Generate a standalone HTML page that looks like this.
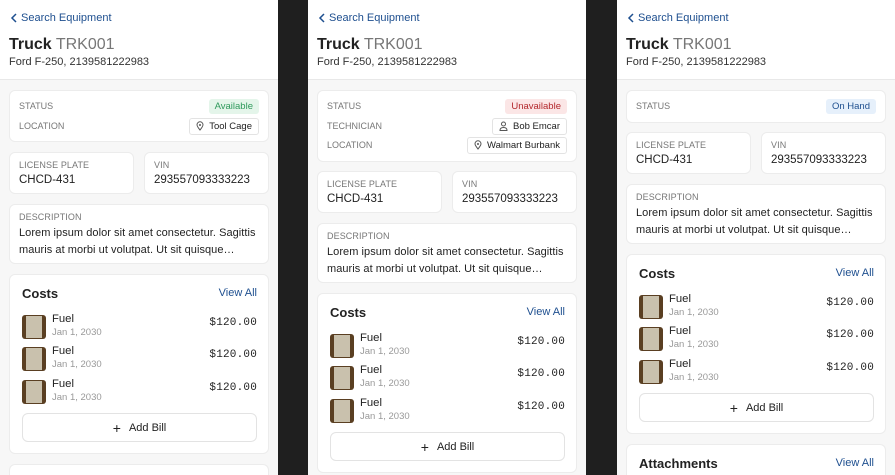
<!DOCTYPE html>
<html><head><meta charset="utf-8"><style>
*{box-sizing:border-box;margin:0;padding:0}
html,body{overflow:hidden}
body{width:895px;height:475px;background:#1f1f1f;position:relative;overflow:hidden;font-family:"Liberation Sans",sans-serif;color:#222}
.p{position:absolute;top:0;width:278px;height:475px;background:#f7f7f7;overflow:hidden}
.hd{position:absolute;left:0;top:0;width:100%;height:80px;background:#fff;border-bottom:1px solid #e8e8e8}
.back{position:absolute;left:10px;top:12px;font-size:11px;color:#1e4f8f;display:flex;align-items:center;gap:3px}
.ttl{position:absolute;left:9px;top:36px;font-size:16px;color:#222}
.ttl b{font-weight:bold}.ttl span{color:#777}
.sub{position:absolute;left:9px;top:56px;font-size:11px;color:#333}
.c{position:absolute;background:#fff;border:1px solid #ececec;border-radius:6px}
.lb{position:absolute;left:9px;font-size:9px;color:#777;letter-spacing:.1px}
.vl{position:absolute;left:9px;font-size:11.5px;color:#222}
.row{position:absolute;left:9px;right:9px;height:16px;display:flex;justify-content:space-between;align-items:center}
.row .l{font-size:9px;color:#777}
.bdg{font-size:9.5px;padding:2px 6px;border-radius:3px}
.pill{font-size:9.5px;padding:2px 6px;border:1px solid #e3e3e3;border-radius:3px;display:flex;align-items:center;gap:5px;color:#222;height:17px}
.desc{position:absolute;left:9px;right:9px;font-size:11px;line-height:17px;color:#222;display:-webkit-box;-webkit-line-clamp:2;-webkit-box-orient:vertical;overflow:hidden;letter-spacing:.05px}
.ct{position:absolute;left:12px;font-size:13px;font-weight:bold;color:#222}
.va{position:absolute;right:11px;font-size:11px;color:#1e4f8f}
.it{position:absolute;left:12px;right:11px;height:26px}
.th{position:absolute;left:0;top:0;width:24px;height:24px;border-radius:3px;background:#5a3f22}
.th:after{content:"";position:absolute;left:4px;top:1px;width:16px;height:22px;background:#c9c1ad}
.fu{position:absolute;left:30px;top:-2px;font-size:11.3px;color:#222}
.dt{position:absolute;left:30px;top:12px;font-size:9.5px;color:#999}
.pr{position:absolute;right:0;top:2px;font-family:"Liberation Mono",monospace;font-size:11px;color:#222;letter-spacing:.2px}
.btn{position:absolute;left:12px;right:11px;height:29px;border:1px solid #e3e3e3;border-radius:6px;font-size:11px;display:flex;align-items:center;justify-content:center;gap:8px;color:#222}
</style></head><body>

<!-- Panel 1 -->
<div class="p" style="left:0">
 <div class="hd"><div class="back"><svg width="8" height="10"><path d="M6 1L2 5l4 4" stroke="#1e4f8f" stroke-width="1.5" fill="none"/></svg>Search Equipment</div>
 <div class="ttl"><b>Truck</b> <span>TRK001</span></div><div class="sub">Ford F-250, 2139581222983</div></div>
 <div class="c" style="left:9px;top:90px;width:260px;height:52px">
  <div class="row" style="top:7px"><span class="l">STATUS</span><span class="bdg" style="background:#e4f5ea;color:#2f9a5c">Available</span></div>
  <div class="row" style="top:27px"><span class="l">LOCATION</span><span class="pill"><svg width="8" height="10"><path d="M4 9C1.5 6 1 5 1 3.8a3 3 0 0 1 6 0C7 5 6.5 6 4 9z" stroke="#555" fill="none"/><circle cx="4" cy="4" r="1" fill="#555"/></svg>Tool Cage</span></div>
 </div>
 <div class="c" style="left:9px;top:152px;width:125px;height:42px"><div class="lb" style="top:7px">LICENSE PLATE</div><div class="vl" style="top:21px">CHCD-431</div></div>
 <div class="c" style="left:144px;top:152px;width:125px;height:42px"><div class="lb" style="top:7px">VIN</div><div class="vl" style="top:21px">293557093333223</div></div>
 <div class="c" style="left:9px;top:204px;width:260px;height:60px"><div class="lb" style="top:7px">DESCRIPTION</div><div class="desc" style="top:20px">Lorem ipsum dolor sit amet consectetur. Sagittis mauris at morbi ut volutpat. Ut sit quisque consequat ipsum dolor sit amet</div></div>
 <div class="c" style="left:9px;top:274px;width:260px;height:180px">
  <div class="ct" style="top:11px">Costs</div><div class="va" style="top:12px">View All</div>
  <div class="it" style="top:40px"><div class="th"></div><div class="fu">Fuel</div><div class="dt">Jan 1, 2030</div><div class="pr">$120.00</div></div>
  <div class="it" style="top:72px"><div class="th"></div><div class="fu">Fuel</div><div class="dt">Jan 1, 2030</div><div class="pr">$120.00</div></div>
  <div class="it" style="top:105px"><div class="th"></div><div class="fu">Fuel</div><div class="dt">Jan 1, 2030</div><div class="pr">$120.00</div></div>
  <div class="btn" style="top:138px"><span style="font-size:14px">+</span>Add Bill</div>
 </div>
 <div class="c" style="left:9px;top:464px;width:260px;height:11px;border-bottom:none;border-radius:6px 6px 0 0"></div>
</div>

<!-- Panel 2 -->
<div class="p" style="left:308px">
 <div class="hd"><div class="back"><svg width="8" height="10"><path d="M6 1L2 5l4 4" stroke="#1e4f8f" stroke-width="1.5" fill="none"/></svg>Search Equipment</div>
 <div class="ttl"><b>Truck</b> <span>TRK001</span></div><div class="sub">Ford F-250, 2139581222983</div></div>
 <div class="c" style="left:9px;top:90px;width:260px;height:72px">
  <div class="row" style="top:7px"><span class="l">STATUS</span><span class="bdg" style="background:#fbe6e6;color:#b3282d">Unavailable</span></div>
  <div class="row" style="top:27px"><span class="l">TECHNICIAN</span><span class="pill"><svg width="9" height="10"><circle cx="4.5" cy="3" r="2" stroke="#555" fill="none"/><path d="M1 9.5c0-2 1.5-3 3.5-3s3.5 1 3.5 3z" stroke="#555" fill="none"/></svg>Bob Emcar</span></div>
  <div class="row" style="top:46px"><span class="l">LOCATION</span><span class="pill"><svg width="8" height="10"><path d="M4 9C1.5 6 1 5 1 3.8a3 3 0 0 1 6 0C7 5 6.5 6 4 9z" stroke="#555" fill="none"/><circle cx="4" cy="4" r="1" fill="#555"/></svg>Walmart Burbank</span></div>
 </div>
 <div class="c" style="left:9px;top:171px;width:125px;height:42px"><div class="lb" style="top:7px">LICENSE PLATE</div><div class="vl" style="top:21px">CHCD-431</div></div>
 <div class="c" style="left:144px;top:171px;width:125px;height:42px"><div class="lb" style="top:7px">VIN</div><div class="vl" style="top:21px">293557093333223</div></div>
 <div class="c" style="left:9px;top:223px;width:260px;height:60px"><div class="lb" style="top:7px">DESCRIPTION</div><div class="desc" style="top:20px">Lorem ipsum dolor sit amet consectetur. Sagittis mauris at morbi ut volutpat. Ut sit quisque consequat ipsum dolor sit amet</div></div>
 <div class="c" style="left:9px;top:293px;width:260px;height:180px">
  <div class="ct" style="top:11px">Costs</div><div class="va" style="top:12px">View All</div>
  <div class="it" style="top:40px"><div class="th"></div><div class="fu">Fuel</div><div class="dt">Jan 1, 2030</div><div class="pr">$120.00</div></div>
  <div class="it" style="top:72px"><div class="th"></div><div class="fu">Fuel</div><div class="dt">Jan 1, 2030</div><div class="pr">$120.00</div></div>
  <div class="it" style="top:105px"><div class="th"></div><div class="fu">Fuel</div><div class="dt">Jan 1, 2030</div><div class="pr">$120.00</div></div>
  <div class="btn" style="top:138px"><span style="font-size:14px">+</span>Add Bill</div>
 </div>
</div>

<!-- Panel 3 -->
<div class="p" style="left:617px">
 <div class="hd"><div class="back"><svg width="8" height="10"><path d="M6 1L2 5l4 4" stroke="#1e4f8f" stroke-width="1.5" fill="none"/></svg>Search Equipment</div>
 <div class="ttl"><b>Truck</b> <span>TRK001</span></div><div class="sub">Ford F-250, 2139581222983</div></div>
 <div class="c" style="left:9px;top:90px;width:260px;height:33px">
  <div class="row" style="top:7px"><span class="l">STATUS</span><span class="bdg" style="background:#e6f0fb;color:#1e4f8f">On Hand</span></div>
 </div>
 <div class="c" style="left:9px;top:132px;width:125px;height:42px"><div class="lb" style="top:7px">LICENSE PLATE</div><div class="vl" style="top:21px">CHCD-431</div></div>
 <div class="c" style="left:144px;top:132px;width:125px;height:42px"><div class="lb" style="top:7px">VIN</div><div class="vl" style="top:21px">293557093333223</div></div>
 <div class="c" style="left:9px;top:184px;width:260px;height:60px"><div class="lb" style="top:7px">DESCRIPTION</div><div class="desc" style="top:20px">Lorem ipsum dolor sit amet consectetur. Sagittis mauris at morbi ut volutpat. Ut sit quisque consequat ipsum dolor sit amet</div></div>
 <div class="c" style="left:9px;top:254px;width:260px;height:180px">
  <div class="ct" style="top:11px">Costs</div><div class="va" style="top:12px">View All</div>
  <div class="it" style="top:40px"><div class="th"></div><div class="fu">Fuel</div><div class="dt">Jan 1, 2030</div><div class="pr">$120.00</div></div>
  <div class="it" style="top:72px"><div class="th"></div><div class="fu">Fuel</div><div class="dt">Jan 1, 2030</div><div class="pr">$120.00</div></div>
  <div class="it" style="top:105px"><div class="th"></div><div class="fu">Fuel</div><div class="dt">Jan 1, 2030</div><div class="pr">$120.00</div></div>
  <div class="btn" style="top:138px"><span style="font-size:14px">+</span>Add Bill</div>
 </div>
 <div class="c" style="left:9px;top:444px;width:260px;height:31px;border-bottom:none;border-radius:6px 6px 0 0">
  <div class="ct" style="top:11px">Attachments</div><div class="va" style="top:12px">View All</div>
 </div>
</div>
</body></html>
